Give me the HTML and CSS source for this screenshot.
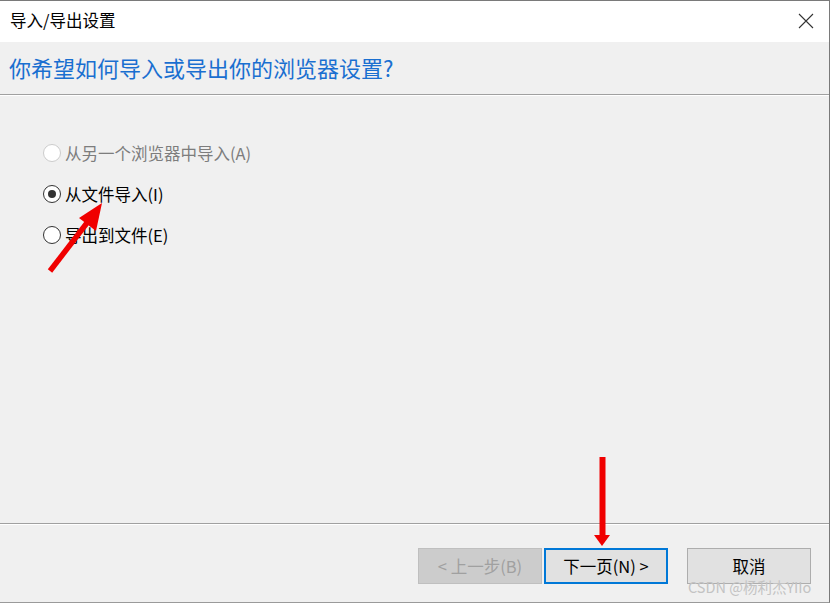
FILE: index.html
```html
<!DOCTYPE html>
<html lang="zh-CN">
<head>
<meta charset="utf-8">
<link rel="stylesheet" href="styles.css">
</head>
<body>
<div class="window">
  <div class="titlebar">
    <span class="title">导入/导出设置</span>
    <svg class="close" width="16" height="16" viewBox="0 0 16 16"><path d="M1 1 L15 15 M15 1 L1 15" stroke="#333" stroke-width="1.1" fill="none"/></svg>
  </div>
  <div class="header">
    <h1 class="heading">你希望如何导入或导出你的浏览器设置?</h1>
  </div>
  <div class="body">
    <div class="options">
      <label class="option disabled"><span class="radio"></span><span class="label">从另一个浏览器中导入(A)</span></label>
      <label class="option"><span class="radio checked"></span><span class="label">从文件导入(I)</span></label>
      <label class="option"><span class="radio"></span><span class="label">导出到文件(E)</span></label>
    </div>
    <svg class="arrow arrow-diag" width="80" height="90" viewBox="0 0 80 90">
      <line x1="7" y1="84" x2="47" y2="32" stroke="#f00000" stroke-width="5.5" stroke-linecap="butt"/>
      <polygon points="59,16 36,31 53,44" fill="#f00000"/>
    </svg>
  </div>
  <div class="footer">
    <button class="btn btn-disabled">&lt; 上一步(B)</button>
    <button class="btn btn-default">下一页(N) &gt;</button>
    <button class="btn btn-cancel">取消</button>
    <svg class="arrow arrow-down" width="20" height="92" viewBox="0 0 20 92">
      <rect x="7.5" y="0" width="6" height="80" fill="#f00000"/>
      <polygon points="2,78 18,78 10,89" fill="#f00000"/>
    </svg>
    <span class="watermark">CSDN @杨利杰YIIo</span>
  </div>
</div>
</body>
</html>
```
FILE: styles.css
```css
html, body {
  margin: 0;
  padding: 0;
  background: #ffffff;
}
body {
  font-family: "Noto Sans CJK SC", "Noto Sans", sans-serif;
}
.window {
  position: relative;
  width: 830px;
  height: 603px;
  border-top: 1px solid #7a7a7a;
  border-right: 1px solid #7a7a7a;
  border-bottom: 1px solid #9a9a9a;
  display: flex;
  flex-direction: column;
  background: #f0f0f0;
  box-sizing: border-box;
}
.titlebar {
  height: 41px;
  background: #ffffff;
  display: flex;
  align-items: center;
  justify-content: space-between;
  padding: 0 15px 0 10px;
  flex: none;
}
.title {
  font-size: 16.5px;
  color: #000;
  line-height: 1;
  margin-top: -2px;
}
.close {
  margin-top: -1px;
}
.header {
  height: 52px;
  flex: none;
  display: flex;
  align-items: center;
  padding-left: 9px;
  border-bottom: 1px solid #a0a0a0;
  box-shadow: 0 1px 0 #ffffff;
}
.heading {
  margin: 0;
  font-weight: normal;
  font-size: 22px;
  color: #1a6fd0;
  line-height: 1;
  margin-top: -2px;
}
.body {
  position: relative;
  flex: 1;
  padding: 46px 0 0 43px;
  border-bottom: 1px solid #a0a0a0;
  box-shadow: 0 1px 0 #ffffff;
}
.options {
  display: flex;
  flex-direction: column;
  gap: 17px;
}
.option {
  display: flex;
  align-items: center;
  height: 24px;
  gap: 4px;
  font-size: 16.5px;
  color: #000;
}
.option.disabled {
  color: #7d7d7d;
}
.radio {
  width: 18px;
  height: 18px;
  box-sizing: border-box;
  border: 1.5px solid #333;
  border-radius: 50%;
  background: #fff;
  display: flex;
  align-items: center;
  justify-content: center;
  flex: none;
}
.disabled .radio {
  border-color: #cccccc;
}
.radio.checked::after {
  content: "";
  width: 8px;
  height: 8px;
  border-radius: 50%;
  background: #333;
}
.label {
  line-height: 1;
}
.arrow {
  position: absolute;
}
.arrow-diag {
  left: 43px;
  top: 92px;
}
.footer {
  position: relative;
  height: 78px;
  flex: none;
  display: flex;
  align-items: flex-start;
  padding: 24px 18px 0 0;
  justify-content: flex-end;
  box-sizing: border-box;
}
.btn {
  width: 124px;
  height: 36px;
  box-sizing: border-box;
  font-family: "Noto Sans CJK SC", "Noto Sans", sans-serif;
  font-size: 16.5px;
  background: #e1e1e1;
  border: 1px solid #adadad;
  color: #000;
  padding: 0;
  line-height: 1;
}
.btn-disabled {
  background: #cccccc;
  border-color: #bfbfbf;
  color: #a0a0a0;
}
.btn-default {
  margin-left: 2px;
  border: 2px solid #0078d7;
}
.btn-cancel {
  margin-left: 19px;
}
.arrow-down {
  left: 592px;
  top: -67px;
}
.watermark {
  position: absolute;
  left: 688px;
  top: 56px;
  font-size: 14.5px;
  color: #c3c3c3;
  line-height: 1;
  white-space: nowrap;
}
```
